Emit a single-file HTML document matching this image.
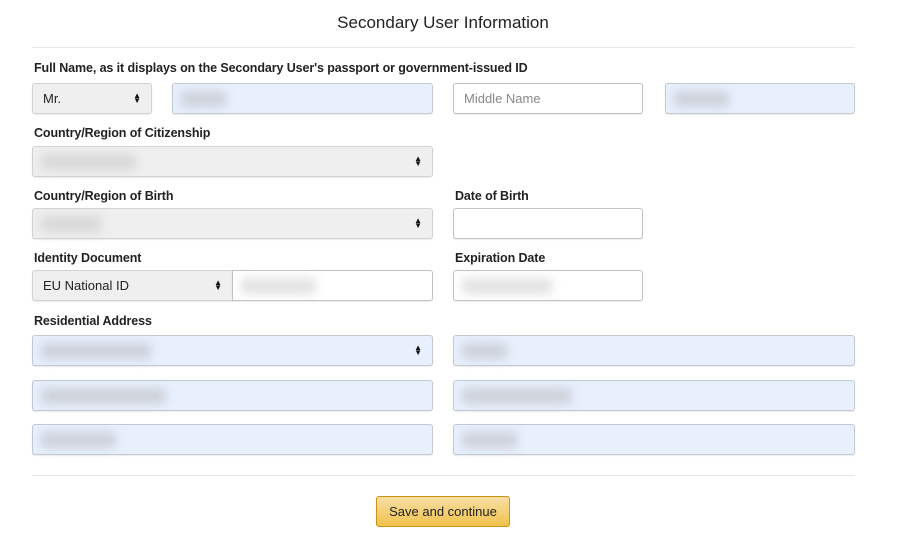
<!DOCTYPE html>
<html><head><style>
body{margin:0;width:900px;height:550px;background:#fff;font-family:"Liberation Sans",sans-serif;position:relative;overflow:hidden}
.a{position:absolute}
.t{left:0;width:886px;text-align:center;top:13px;font-size:17px;color:#222}
.hr{height:1px;background:#e7e7e7;left:32px;width:823px}
.l{font-size:12.5px;font-weight:bold;color:#222;letter-spacing:-0.1px}
.b{box-sizing:border-box;border:1px solid #c2c2c2;border-radius:3px;box-shadow:0 1px 1px rgba(0,0,0,.08);height:31px;font-size:13px;color:#222;line-height:29px;padding-left:10px}
.g{background:#efefef;border-color:#d2d2d2}
.bl{background:#e8f0fe;border-color:#c4c8d0}
.w{background:#fff}
.ar{position:absolute;right:10px;top:9px;font-size:8px;line-height:5px;color:#111}
.bz{position:absolute;top:7px;height:16px;background:#cdd1d9;filter:blur(5px);border-radius:4px}
</style></head><body>
<div class="a t">Secondary User Information</div>
<div class="a hr" style="top:47px"></div>
<div class="a l" style="left:34px;top:61px">Full Name, as it displays on the Secondary User's passport or government-issued ID</div>
<div class="a b g" style="left:32px;top:83px;width:120px">Mr.<span class="ar">▲<br>▼</span></div>
<div class="a b bl" style="left:172px;top:83px;width:261px"><div class="bz" style="left:8px;width:45px"></div></div>
<div class="a b w" style="left:453px;top:83px;width:190px;color:#888">Middle Name</div>
<div class="a b bl" style="left:665px;top:83px;width:190px"><div class="bz" style="left:8px;width:55px"></div></div>
<div class="a l" style="left:34px;top:126px">Country/Region of Citizenship</div>
<div class="a b g" style="left:32px;top:146px;width:401px"><div class="bz" style="left:8px;width:95px;background:#d8d8d8"></div><span class="ar">▲<br>▼</span></div>
<div class="a l" style="left:34px;top:189px">Country/Region of Birth</div>
<div class="a l" style="left:455px;top:189px">Date of Birth</div>
<div class="a b g" style="left:32px;top:208px;width:401px"><div class="bz" style="left:8px;width:60px;background:#d8d8d8"></div><span class="ar">▲<br>▼</span></div>
<div class="a b w" style="left:453px;top:208px;width:190px"></div>
<div class="a l" style="left:34px;top:251px">Identity Document</div>
<div class="a l" style="left:455px;top:251px">Expiration Date</div>
<div class="a b g" style="left:32px;top:270px;width:201px;border-radius:3px 0 0 3px">EU National ID<span class="ar">▲<br>▼</span></div>
<div class="a b w" style="left:232px;top:270px;width:201px;border-radius:0 3px 3px 0"><div class="bz" style="left:8px;width:75px;background:#e2e2e2"></div></div>
<div class="a b w" style="left:453px;top:270px;width:190px"><div class="bz" style="left:8px;width:90px;background:#e2e2e2"></div></div>
<div class="a l" style="left:34px;top:314px">Residential Address</div>
<div class="a b bl" style="left:32px;top:335px;width:401px"><div class="bz" style="left:8px;width:110px"></div><span class="ar">▲<br>▼</span></div>
<div class="a b bl" style="left:453px;top:335px;width:402px"><div class="bz" style="left:8px;width:45px"></div></div>
<div class="a b bl" style="left:32px;top:380px;width:401px"><div class="bz" style="left:8px;width:125px"></div></div>
<div class="a b bl" style="left:453px;top:380px;width:402px"><div class="bz" style="left:8px;width:110px"></div></div>
<div class="a b bl" style="left:32px;top:424px;width:401px"><div class="bz" style="left:8px;width:75px"></div></div>
<div class="a b bl" style="left:453px;top:424px;width:402px"><div class="bz" style="left:8px;width:55px"></div></div>
<div class="a hr" style="top:475px"></div>
<div class="a" style="left:376px;top:496px;width:134px;height:31px;box-sizing:border-box;border:1px solid #c89411;border-radius:3px;background:linear-gradient(#f7dfa5,#f0c14b);text-align:center;line-height:29px;font-size:13px;color:#222">Save and continue</div>
</body></html>
